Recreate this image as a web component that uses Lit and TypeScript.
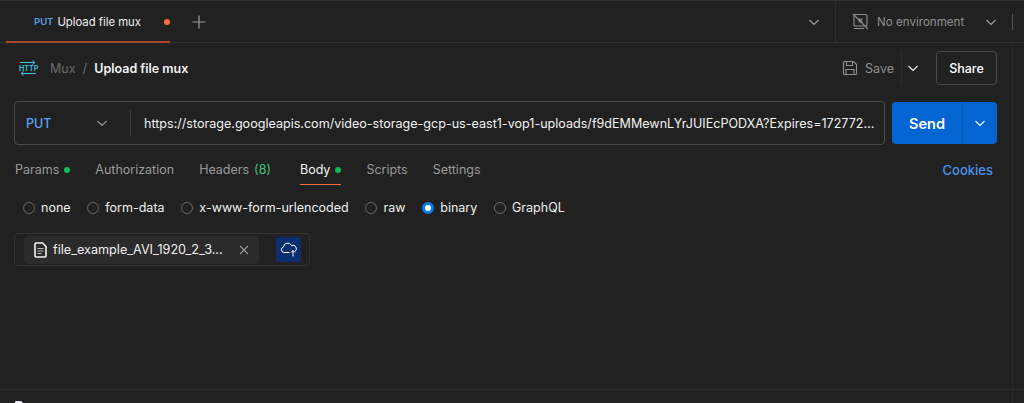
import { LitElement, html, css } from "lit";
import { customElement } from "lit/decorators.js";

const chev = html`<svg width="12" height="12" viewBox="0 0 12 12" fill="none" stroke="currentColor" stroke-width="1.1"><path d="M1.500 4l4.500 4.500L10.500 4"/></svg>`;

@customElement("app-root")
export class AppRoot extends LitElement {
  static styles = css`
    :host { display: flex; flex-direction: column; width: 1024px; height: 403px; overflow: hidden; background: #212121; color: #fff; font-family: Inter, "Liberation Sans", sans-serif; font-size: 13px; box-sizing: border-box; border-top: 1px solid #2e2e2e; }
    svg { display: block; flex: none; }
    .top { height: 41px; flex: none; display: flex; align-items: stretch; border-bottom: 1px solid #303030; position: relative; }
    .tab { width: 164px; margin-left: 6px; box-sizing: border-box; padding-left: 28px; display: flex; align-items: center; position: relative; font-size: 11.300px; color: #f0f0f0; white-space: nowrap; }
    .tab::after { content: ""; position: absolute; left: 0; right: 0; bottom: -1px; height: 2px; background: #a84a2a; }
    .put-s { color: #5a9fe6; font-size: 9.500px; font-weight: 600; margin-right: 4px; }
    .dot { width: 6px; height: 6px; border-radius: 50%; background: #ff6c37; margin-left: 23px; flex: none; }
    .plus { margin-left: 22px; align-self: center; color: #9a9a9a; }
    .spacer { flex: 1; }
    .top-chev { align-self: center; color: #a0a0a0; margin-right: 15px; }
    .env { width: 189px; box-sizing: border-box; border-left: 1px solid #2e2e2e; display: flex; align-items: center; padding-left: 16px; color: #8f8f8f; font-size: 11.600px; }
    .env .label { margin-left: 8px; width: 108px; white-space: nowrap; }
    .env .ec { color: #a0a0a0; }
    .env .tick { width: 1px; height: 16px; background: #555; margin-left: 15px; }
    .body { flex: 1; width: 1012px; border-right: 1px solid #2a2a2a; display: flex; flex-direction: column; }
    .crumbs { height: 50px; flex: none; display: flex; align-items: center; padding: 0 15px 0 19px; }
    .crumbs .mux { color: #6b6b6b; margin-left: 13px; font-size: 12.500px; }
    .crumbs .sl { color: #6b6b6b; margin: 0 7px; font-size: 13px; }
    .crumbs .name { font-weight: 600; font-size: 12.500px; color: #f4f4f4; }
    .save { color: #8f8f8f; display: flex; align-items: center; gap: 7px; font-size: 12.500px; padding-right: 7px; border-right: 1px solid #2c2c2c; height: 34px; }
    .save-c { color: #f0f0f0; margin: 0 17px 0 5px; }
    .share { width: 61px; height: 34px; box-sizing: border-box; border: 1px solid #4a4a4a; border-radius: 4px; display: flex; align-items: center; justify-content: center; font-size: 12.500px; font-weight: 500; }
    .reqrow { display: flex; margin: 8px 15px 0 14px; gap: 7px; height: 44px; flex: none; }
    .url { flex: 1; min-width: 0; box-sizing: border-box; border: 1px solid #4a4a4a; border-radius: 4px; display: flex; align-items: center; }
    .method { width: 115px; flex: none; box-sizing: border-box; padding: 0 22px 0 11px; display: flex; align-items: center; justify-content: space-between; color: #5aa2f5; font-size: 12.500px; font-weight: 500; }
    .method svg { color: #9c9c9c; }
    .sep { width: 1px; height: 26px; background: #3a3a3a; flex: none; }
    .urltext { flex: 1; min-width: 0; margin: 0 5px 0 13px; font-size: 12.570px; color: #f2f2f2; white-space: nowrap; overflow: hidden; text-overflow: ellipsis; }
    .send { width: 105px; height: 42px; align-self: center; flex: none; background: #0265d2; border-radius: 4px; display: flex; }
    .send .s { width: 70px; display: flex; align-items: center; justify-content: center; font-weight: 600; font-size: 14.500px; border-right: 1px solid #0254ae; }
    .send .d { flex: 1; display: flex; align-items: center; justify-content: center; }
    .tabs { display: flex; align-items: stretch; height: 31px; flex: none; margin: 9px 19px 1px 15px; color: #9a9a9a; font-size: 12.500px; }
    .t { display: flex; align-items: center; margin-right: 25px; position: relative; }
    .t.gap { margin-right: 29px; }
    .t.on { color: #f4f4f4; }
    .t.on::after { content: ""; position: absolute; left: 0; right: 0; bottom: 0; height: 1px; background: #ff6c37; }
    .g { width: 6px; height: 6px; border-radius: 50%; background: #0cbb52; margin-left: 5px; }
    .n { color: #3fc47a; margin-left: 5px; }
    .cookies { margin-left: auto; color: #4a94f0; display: flex; align-items: center; font-weight: 500; font-size: 13px; }
    .radios { display: flex; align-items: center; height: 43px; flex: none; padding-left: 23px; font-size: 12.500px; color: #f0f0f0; }
    .r { display: flex; align-items: center; gap: 6px; margin-right: 16.800px; }
    .rc { width: 12px; height: 12px; box-sizing: border-box; border: 1px solid #6b6b6b; border-radius: 50%; }
    .rc.on { border: 3.500px solid #0a7cf0; background: #fff; }
    .file { margin: 4px 0 0 14px; width: 296px; height: 33px; flex: none; box-sizing: border-box; border: 1px solid #333; border-radius: 4px; display: flex; align-items: center; padding: 0 8px 0 9px; }
    .chip { width: 235px; height: 28px; box-sizing: border-box; background: #2b2b2b; border-radius: 4px; display: flex; align-items: center; padding: 0 10px; color: #f0f0f0; font-size: 12.650px; }
    .chip .fn { margin-left: 6px; flex: 1; white-space: nowrap; }
    .chip .x { color: #9a9a9a; }
    .up { margin-left: auto; width: 25px; height: 25px; background: #0a2e6e; border-radius: 3px; display: flex; align-items: center; justify-content: center; }
    .bottom { margin-top: auto; height: 14px; flex: none; border-top: 1px solid #2c2c2c; width: 1024px; padding: 11px 0 0 15px; box-sizing: border-box; }
  `;

  render() {
    return html`
      <div class="top">
        <div class="tab"><span class="put-s">PUT</span>Upload file mux<span class="dot"></span></div>
        <svg class="plus" width="14" height="14" viewBox="0 0 14 14" stroke="currentColor" stroke-width="1.200"><path d="M7 .5v13M.5 7h13"/></svg>
        <div class="spacer"></div>
        <span class="top-chev">${chev}</span>
        <div class="env">
          <svg width="17" height="17" viewBox="0 0 17 17" fill="none" stroke="#8f8f8f" stroke-width="1.100"><rect x="2" y="1.500" width="13" height="11.500" rx="1"/><path d="M2 15.500h10M1 1l15 15M6.500 5.500l4 4M10.500 5.500l-4 4"/></svg>
          <span class="label">No environment</span>
          <span class="ec">${chev}</span>
          <span class="tick"></span>
        </div>
      </div>
      <div class="body">
        <div class="crumbs">
          <svg width="18" height="16" viewBox="0 0 18 16" fill="none" stroke="#3fc5dc" stroke-width="1" style="overflow:visible"><path d="M1 2.500h15M13.500.5l2.500 2-2.500 2M17 13.500H2M4.500 11.500l-2.500 2 2.500 2"/><text x="0" y="10.800" font-size="7.200" font-family="Inter, sans-serif" font-weight="600" fill="#3fc5dc" stroke="none">HTTP</text></svg>
          <span class="mux">Mux</span><span class="sl">/</span><span class="name">Upload file mux</span>
          <div class="spacer"></div>
          <div class="save">
            <svg width="16" height="16" viewBox="0 0 16 16" fill="none" stroke="#8f8f8f" stroke-width="1.100"><path d="M1.500 2.500a1 1 0 0 1 1-1h9l3 3v9a1 1 0 0 1-1 1h-11a1 1 0 0 1-1-1z"/><path d="M4.500 1.500v4h6v-4M4 14.500v-5h8v5"/></svg>
            Save
          </div>
          <span class="save-c">${chev}</span>
          <div class="share">Share</div>
        </div>
        <div class="reqrow">
          <div class="url">
            <div class="method">PUT ${chev}</div>
            <div class="sep"></div>
            <div class="urltext">https://storage.googleapis.com/video-storage-gcp-us-east1-vop1-uploads/f9dEMMewnLYrJUIEcPODXA?Expires=1727722800&amp;GoogleAccessId=uploads</div>
          </div>
          <div class="send"><div class="s">Send</div><div class="d">${chev}</div></div>
        </div>
        <div class="tabs">
          <div class="t">Params<span class="g"></span></div>
          <div class="t">Authorization</div>
          <div class="t gap">Headers<span class="n">(8)</span></div>
          <div class="t on">Body<span class="g"></span></div>
          <div class="t">Scripts</div>
          <div class="t">Settings</div>
          <div class="cookies">Cookies</div>
        </div>
        <div class="radios">
          <div class="r"><span class="rc"></span>none</div>
          <div class="r"><span class="rc"></span>form-data</div>
          <div class="r"><span class="rc"></span>x-www-form-urlencoded</div>
          <div class="r"><span class="rc"></span>raw</div>
          <div class="r"><span class="rc on"></span>binary</div>
          <div class="r"><span class="rc"></span>GraphQL</div>
        </div>
        <div class="file">
          <div class="chip">
            <svg width="13" height="16" viewBox="0 0 13 16" fill="none" stroke="#f4f4f4" stroke-width="1.600"><path d="M1 2a1 1 0 0 1 1-1h6.500L12 4.500V14a1 1 0 0 1-1 1H2a1 1 0 0 1-1-1z"/><path d="M3.500 6.500h6M3.500 9h6M3.500 11.500h4" stroke="#bbb" stroke-width="1.200"/></svg>
            <span class="fn">file_example_AVI_1920_2_3...</span>
            <svg class="x" width="10" height="10" viewBox="0 0 10 10" stroke="currentColor" stroke-width="1.100"><path d="M1 1l8 8M9 1l-8 8"/></svg>
          </div>
          <div class="up">
            <svg width="17" height="15" viewBox="0 0 17 15" fill="none" stroke="#fff" stroke-width="1"><path d="M9.500 10.500H3.800a2.800 2.800 0 0 1-.3-5.500 4.200 4.200 0 0 1 8-1.500 3.500 3.500 0 0 1 3.500 6"/><path d="M13 14.500V8.500M11 10.500l2-2 2 2"/></svg>
          </div>
        </div>
        <div class="bottom"><svg width="9" height="11" viewBox="0 0 9 11"><path d="M0 1a1 1 0 0 1 1-1h5l3 3v8H0z" fill="#eaeaf5"/></svg></div>
      </div>
    `;
  }
}
